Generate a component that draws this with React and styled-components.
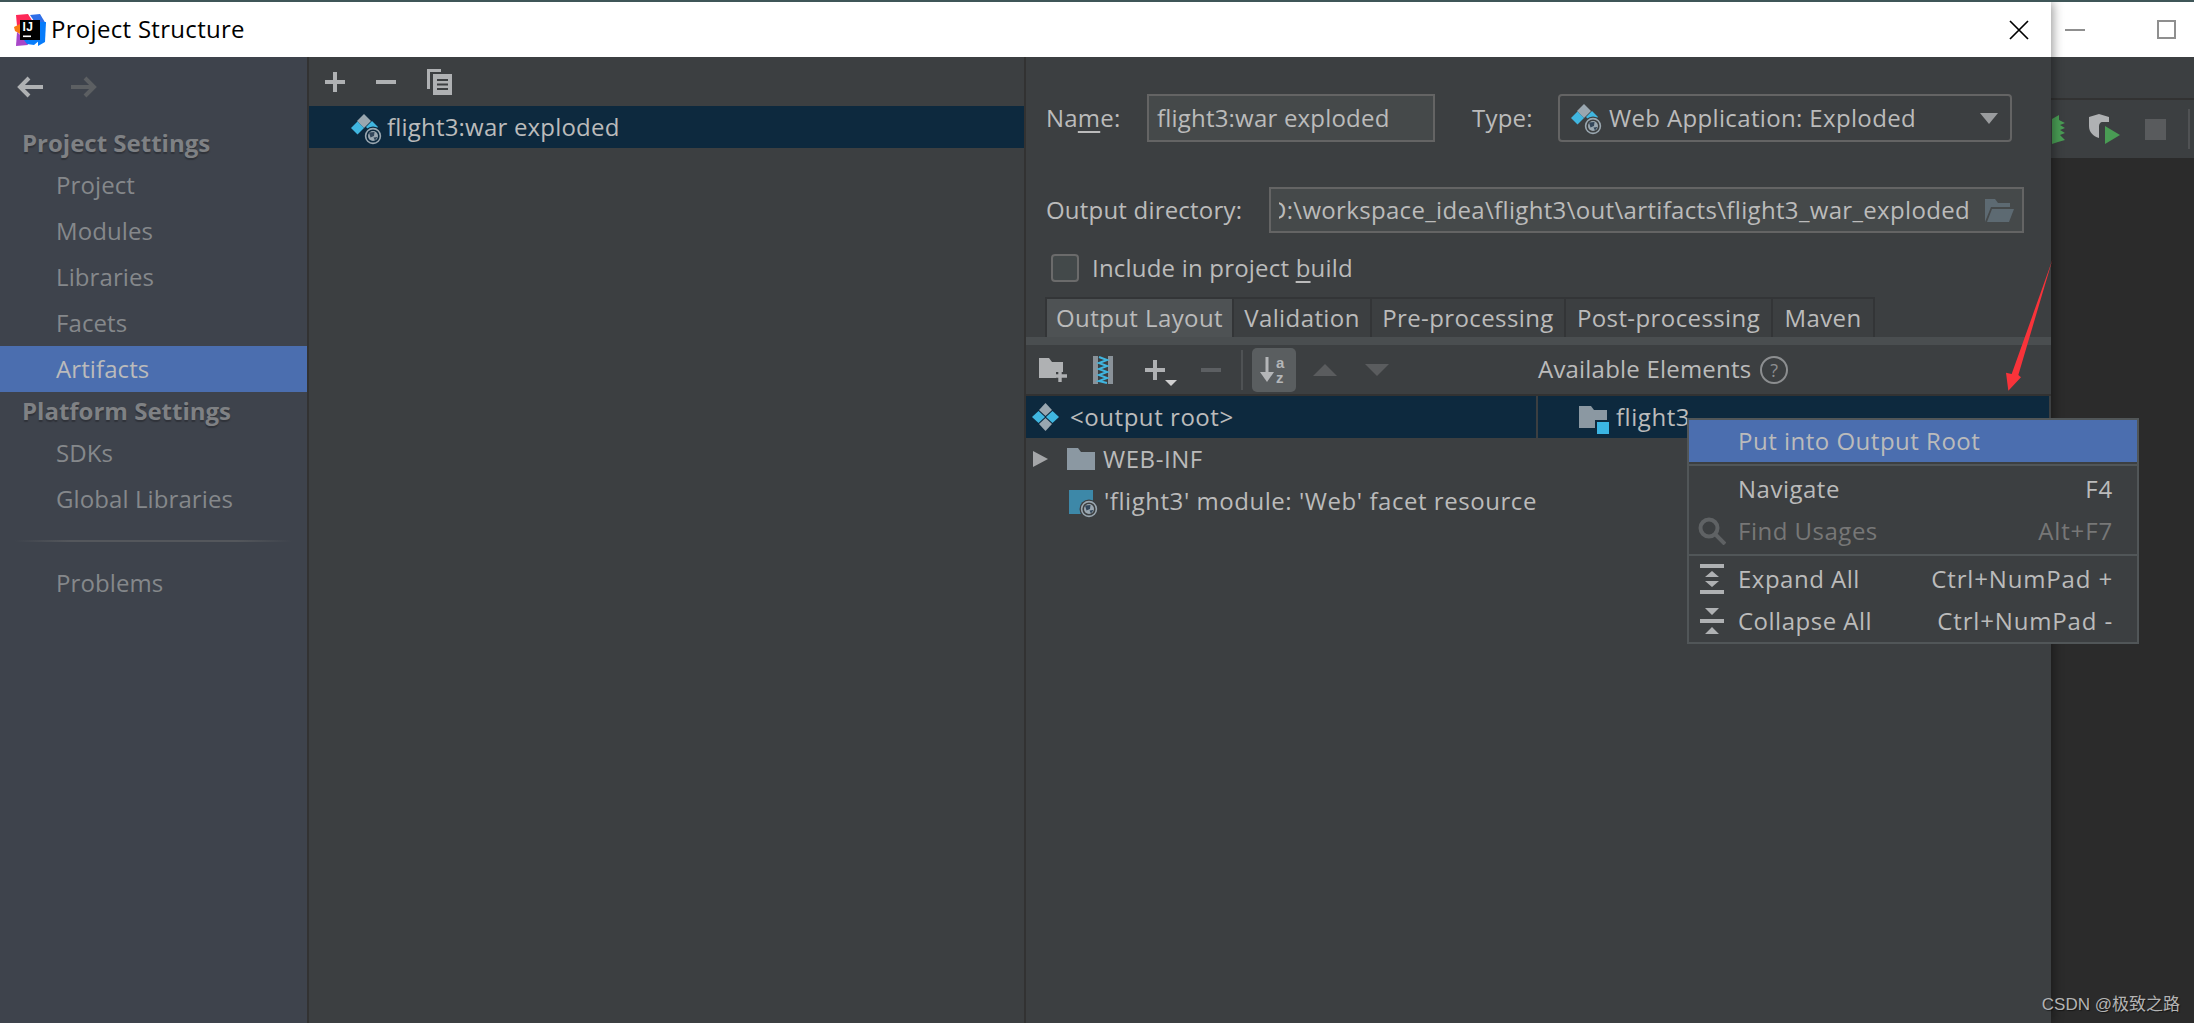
import React from 'react';
import styled, { createGlobalStyle } from 'styled-components';

const GlobalStyle = createGlobalStyle`
  html, body { margin: 0; padding: 0; background: #2b2b2b; }
  body { font-family: "Open Sans", "Noto Sans", sans-serif; overflow: hidden; }
  #root { width: 2194px; height: 1023px; }
`;

const Page = styled.div`
  position: relative;
  width: 2194px; height: 1023px;
  display: flex;
  overflow: hidden;
  border-top: 2px solid #3f5658;
  box-sizing: border-box;
  font-size: 24px;
  letter-spacing: 0.2px;
  color: #bbbbbb;
`;

// Open Sans sits a little lower in the line than the original font
const Label = styled.span`
  margin-bottom: 2px;
`;

const IconDown = styled.span`
  display: flex;
  margin-top: ${p => p.$by || 4}px;
`;

const Dialog = styled.div`
  width: 2051px;
  flex-shrink: 0;
  display: flex; flex-direction: column;
  background: #3c3f41;
  box-shadow: 2px 0 10px rgba(0,0,0,0.4);
  position: relative;
  z-index: 1;
`;

const TitleBar = styled.div`
  height: 55px;
  flex-shrink: 0;
  background: #ffffff;
  display: flex; align-items: center;
  padding: 0 22px 0 14px;
  color: #000;
  letter-spacing: 0.3px;
  gap: 5px;
`;

const TitleText = styled(Label)`
  flex: 1;
`;

const Body = styled.div`
  flex: 1;
  display: flex;
  min-height: 0;
`;

const Sidebar = styled.div`
  width: 309px;
  box-sizing: border-box;
  flex-shrink: 0;
  background: #3e434c;
  border-right: 2px solid #323232;
  display: flex; flex-direction: column;
`;

const NavRow = styled.div`
  height: 67px;
  padding: 0 0 8px 17px;
  box-sizing: border-box;
  display: flex; align-items: center; gap: 28px;
`;

const SideHeader = styled.div`
  height: 38px;
  box-sizing: border-box;
  padding: 0 0 2px 22px;
  display: flex; align-items: center;
  font-weight: 700;
  letter-spacing: 0;
  color: #7f8184;
  text-shadow: 0 2px 1px #30333a;
`;

const SideItem = styled.div`
  height: 46px;
  box-sizing: border-box;
  padding: 0 0 2px 56px;
  display: flex; align-items: center;
  letter-spacing: 0.1px;
  color: ${p => (p.$active ? '#bbbbbb' : '#85888b')};
  background: ${p => (p.$active ? '#4b6eaf' : 'transparent')};
`;

const SideSeparator = styled.div`
  height: 38px;
  display: flex; align-items: center;
  padding: 0 15px;
  &::after {
    content: '';
    flex: 1;
    height: 2px;
    background: linear-gradient(90deg, transparent, #54575c 20%, #54575c 80%, transparent);
  }
`;

const ListPanel = styled.div`
  width: 717px;
  box-sizing: border-box;
  flex-shrink: 0;
  border-right: 2px solid #323232;
  display: flex; flex-direction: column;
`;

const ListToolbar = styled.div`
  height: 49px;
  padding-left: 16px;
  display: flex; align-items: center; gap: 31px;
`;

const ListRow = styled.div`
  height: 42px;
  background: #0d293e;
  padding-left: 42px;
  display: flex; align-items: center; gap: 5px;
`;

const Detail = styled.div`
  flex: 1;
  min-width: 0;
  display: flex; flex-direction: column;
`;

const Form = styled.div`
  padding: 37px 27px 0 20px;
  display: flex; flex-direction: column;
`;

const NameRow = styled.div`
  height: 48px;
  display: flex; align-items: center;
`;

const FieldLabel = styled.label`
  width: ${p => p.$width}px;
  margin-left: ${p => p.$gap || 0}px;
  margin-bottom: 2px;
  flex-shrink: 0;
  u { text-underline-offset: 4px; }
`;

const TextBox = styled.div`
  width: ${p => p.$width}px;
  height: ${p => p.$height || 48}px;
  box-sizing: border-box;
  flex-shrink: ${p => (p.$width ? 0 : 1)};
  flex-grow: ${p => (p.$width ? 0 : 1)};
  min-width: 0;
  background: #45494a;
  border: 2px solid #646464;
  padding: 0 8px;
  display: flex; align-items: center;
`;

const TypeCombo = styled.div`
  width: 454px; height: 48px;
  box-sizing: border-box;
  border: 2px solid #646464;
  border-radius: 4px;
  padding: 0 11px;
  display: flex; align-items: center; gap: 7px;
  letter-spacing: 0.35px;
`;

const ComboText = styled(Label)`
  flex: 1;
`;

const ComboArrow = styled.span`
  width: 0; height: 0;
  margin-right: 1px;
  border-left: 9px solid transparent;
  border-right: 9px solid transparent;
  border-top: 11px solid #9a9c9e;
`;

const OutputRow = styled.div`
  margin-top: 45px;
  height: 46px;
  display: flex; align-items: center;
`;

const PathClip = styled.div`
  flex: 1;
  min-width: 0;
  margin-bottom: 2px;
  overflow: hidden;
  display: flex; justify-content: flex-end;
  white-space: nowrap;
  letter-spacing: 0.33px;
`;

const PathText = styled.span`
  flex-shrink: 0;
`;

const CheckRow = styled.div`
  margin-top: 21px;
  margin-left: 5px;
  height: 28px;
  display: flex; align-items: center; gap: 13px;
  u { text-underline-offset: 4px; }
`;

const CheckBox = styled.span`
  width: 28px; height: 28px;
  box-sizing: border-box;
  border: 2px solid #6b6b6b;
  border-radius: 4px;
  background: #43494a;
`;

const TabStrip = styled.div`
  margin-top: 15px;
  height: 40px;
  flex-shrink: 0;
  padding-left: 19px;
  display: flex;
`;

const Tab = styled.div`
  width: ${p => p.$width}px;
  box-sizing: border-box;
  padding-bottom: 2px;
  border: 2px solid #333537;
  border-bottom: none;
  border-left: ${p => (p.$active ? '2px solid #333537' : 'none')};
  background: ${p => (p.$active ? '#4e5254' : 'transparent')};
  display: flex; align-items: center; justify-content: center;
  white-space: nowrap;
  letter-spacing: 0.4px;
`;

const TabBar = styled.div`
  height: 8px;
  flex-shrink: 0;
  background: #4a4e50;
`;

const Toolbar = styled.div`
  height: 49px;
  flex-shrink: 0;
  padding-left: 13px;
  display: flex; align-items: center;
  border-bottom: 2px solid #323232;
`;

const ToolSlot = styled.span`
  margin-left: ${p => p.$gap || 0}px;
  display: flex; align-items: center;
`;

const ToolDivider = styled.span`
  width: 2px; height: 40px;
  margin-left: 20px;
  background: #4f5254;
`;

const SortButton = styled.span`
  width: 44px; height: 44px;
  margin-left: 9px;
  border-radius: 5px;
  background: #5a5e60;
  display: flex; align-items: center; justify-content: center;
`;

const AvailableLabel = styled.span`
  margin-left: 149px;
  display: flex; align-items: center; gap: 9px;
  white-space: nowrap;
`;

const HelpMark = styled.span`
  width: 28px; height: 28px;
  box-sizing: border-box;
  border: 2px solid #8c8e90;
  border-radius: 50%;
  color: #8c8e90;
  font-size: 18px;
  display: flex; align-items: center; justify-content: center;
`;

const SmallDownSlot = styled.span`
  display: flex;
  margin-top: 26px;
`;

const Trees = styled.div`
  flex: 1;
  display: flex;
  min-height: 0;
`;

const TreeColumn = styled.div`
  width: ${p => (p.$left ? '510px' : 'auto')};
  flex: ${p => (p.$left ? '0 0 auto' : '1')};
  min-width: 0;
  overflow: hidden;
  margin-left: ${p => (p.$left ? 0 : '2px')};
  margin-right: ${p => (p.$left ? 0 : '2px')};
`;

const TreeRow = styled.div`
  height: 42px;
  padding-left: ${p => p.$indent}px;
  display: flex; align-items: center; gap: ${p => p.$gap || 8}px;
  white-space: nowrap;
  letter-spacing: 0.55px;
  background: ${p => (p.$selected ? '#0d293e' : 'transparent')};
`;

const Expander = styled.span`
  width: 0; height: 0;
  border-top: 8px solid transparent;
  border-bottom: 8px solid transparent;
  border-left: 15px solid #a4a6a8;
`;

const Ide = styled.div`
  flex: 1;
  display: flex; flex-direction: column;
`;

const IdeTitle = styled.div`
  height: 55px;
  flex-shrink: 0;
  background: #ffffff;
  display: flex; align-items: center;
  padding: 0 0 0 14px;
  gap: 72px;
`;

const MinimizeGlyph = styled.span`
  width: 20px; height: 2px;
  background: #8f8f8f;
`;

const MaximizeGlyph = styled.span`
  width: 19px; height: 19px;
  box-sizing: border-box;
  border: 2px solid #8f8f8f;
`;

const IdeNavBar = styled.div`
  height: 43px;
  flex-shrink: 0;
  background: #3c3f41;
  border-bottom: 2px solid #323232;
  box-sizing: border-box;
`;

const IdeToolbar = styled.div`
  height: 58px;
  flex-shrink: 0;
  background: #3c3f41;
  display: flex; align-items: center;
  padding-left: 1px;
`;

const StopGlyph = styled.span`
  width: 21px; height: 21px;
  margin-left: 25px;
  background: #595b5d;
`;

const IdeDivider = styled.span`
  width: 2px; height: 40px;
  margin-left: 22px;
  background: #505254;
`;

const Editor = styled.div`
  flex: 1;
  background: #2b2b2b;
`;

const PopupMenu = styled.div`
  position: absolute;
  left: 1687px; top: 416px;
  width: 452px;
  box-sizing: border-box;
  background: #3c3f41;
  border: 2px solid #515658;
  z-index: 3;
  letter-spacing: 0.5px;
`;

const MenuItem = styled.div`
  height: 42px;
  display: flex; align-items: center;
  padding-right: 24px;
  background: ${p => (p.$active ? '#4b6eaf' : 'transparent')};
  color: ${p => (p.$disabled ? '#777777' : '#bbbbbb')};
`;

const MenuIcon = styled.span`
  width: 49px;
  flex-shrink: 0;
  display: flex; justify-content: center;
  padding-right: 3px;
  box-sizing: border-box;
`;

const Shortcut = styled(Label)`
  margin-left: auto;
  letter-spacing: 0.85px;
`;

const MenuSeparator = styled.div`
  height: 6px;
  display: flex; align-items: center;
  &::after {
    content: '';
    flex: 1;
    height: 2px;
    background: #515658;
  }
`;

const Arrow = styled.svg`
  position: absolute;
  left: 1980px; top: 248px;
  z-index: 2;
`;

const Watermark = styled.div`
  position: absolute;
  right: 14px; bottom: 8px;
  z-index: 4;
  font-family: "Liberation Sans", "Noto Sans CJK SC", sans-serif;
  font-size: 17px;
  letter-spacing: 0;
  color: #b4b4b4;
  text-shadow: 1px 1px 1px rgba(0,0,0,0.5);
`;

const IdeaLogo = () => (
  <svg width="32" height="32" viewBox="0 0 32 32">
    <path d="M2 1 L14 0 L19 8 L3 12 Z" fill="#fe2857" />
    <path d="M16 1 L26 0 L32 10 L22 10 Z" fill="#2f6fe8" />
    <path d="M0 13 L6 10 L6 20 L1 17 Z" fill="#f97a12" />
    <path d="M3 18 L12 26 L14 31 L2 32 Z" fill="#a846c8" />
    <path d="M24 32 L31 28 L32 8 L24 8 Z" fill="#087cfa" />
    <path d="M10 26 L26 26 L20 31 L13 30 Z" fill="#087cfa" />
    <rect x="6" y="6" width="20" height="20" fill="#000" />
    <text x="8.5" y="17" fontSize="12" fontWeight="700" fill="#fff" fontFamily="Liberation Sans">IJ</text>
    <rect x="9" y="21.5" width="8" height="1.6" fill="#fff" />
  </svg>
);

const CloseGlyph = () => (
  <svg width="20" height="20" viewBox="0 0 20 20">
    <path d="M1 1 L19 19 M19 1 L1 19" stroke="#000" strokeWidth="1.7" />
  </svg>
);

const NavArrow = ({ flip, color }) => (
  <svg width="26" height="24" viewBox="0 0 26 24">
    <g transform={flip ? 'translate(26 0) scale(-1 1)' : undefined}>
      <path d="M12 3 L3 12 L12 21 M3 12 H26" fill="none" stroke={color} strokeWidth="4" />
    </g>
  </svg>
);

const PlusIcon = ({ size = 20, color = '#afb1b3' }) => (
  <svg width={size} height={size} viewBox="0 0 20 20">
    <path d="M0 10 H20 M10 0 V20" stroke={color} strokeWidth="4" />
  </svg>
);

const MinusIcon = ({ color = '#afb1b3' }) => (
  <svg width="20" height="20" viewBox="0 0 20 20">
    <path d="M0 10 H20" stroke={color} strokeWidth="4" />
  </svg>
);

const CopyIcon = () => (
  <svg width="25" height="26" viewBox="0 0 25 26">
    <path d="M0 0 H14 V3 H3 V20 H0 Z" fill="#afb1b3" />
    <path d="M6 5 H25 V26 H6 Z" fill="#afb1b3" />
    <path d="M10 11 H21 M10 15.5 H21 M10 20 H21" stroke="#3c3f41" strokeWidth="2" />
  </svg>
);

const GlobeBadge = ({ x, y, bg }) => (
  <g transform={`translate(${x} ${y})`}>
    <circle cx="8" cy="8" r="9.5" fill={bg} />
    <circle cx="8" cy="8" r="7.4" fill="none" stroke="#9aa7b0" strokeWidth="1.6" />
    <circle cx="8" cy="8" r="5" fill="#9aa7b0" />
    <path d="M4 4.5 L9.5 4 L9 8 L5.5 9.5 Z M8.5 9.5 L12.5 9 L10 12.5 Z" fill="#33465a" />
  </g>
);

const WarIcon = ({ bg = '#0d293e' }) => (
  <svg width="31" height="31" viewBox="0 0 31 31">
    <path d="M13 0 L20 7 L13 14 L6 7 Z" fill="#9aa7b0" />
    <path d="M6.5 7.5 L13 14 L6.5 20.5 L0 14 Z" fill="#40b6e0" />
    <path d="M21 7 L27 13 L21 19 L15 13 Z" fill="#40b6e0" />
    <GlobeBadge x={14} y={14} bg={bg} />
  </svg>
);

const RootIcon = () => (
  <svg width="27" height="28" viewBox="0 0 27 28">
    <path d="M13.5 0 L20 7 L13.5 13 L7 7 Z" fill="#9aa7b0" />
    <path d="M13.5 15 L20 21 L13.5 28 L7 21 Z" fill="#9aa7b0" />
    <path d="M6.5 8 L13 14 L6.5 20 L0 14 Z" fill="#40b6e0" />
    <path d="M20.5 8 L27 14 L20.5 20 L14 14 Z" fill="#40b6e0" />
  </svg>
);

const FolderIcon = () => (
  <svg width="28" height="22" viewBox="0 0 28 22">
    <path d="M0 0 H11 L14 4 H28 V22 H0 Z" fill="#8b98a2" />
  </svg>
);

const ModuleWebIcon = () => (
  <svg width="29" height="28" viewBox="0 0 29 28">
    <path d="M0 0 H24 V24 H0 Z" fill="#3d88a8" />
    <GlobeBadge x={12} y={11} bg="#3c3f41" />
  </svg>
);

const ModuleFolderIcon = () => (
  <svg width="30" height="28" viewBox="0 0 30 28">
    <path d="M0 0 H12 L15 4 H28 V22 H0 Z" fill="#8b98a2" />
    <rect x="16" y="14" width="14" height="14" fill="#0d293e" />
    <rect x="18" y="16" width="12" height="12" fill="#3bb5e3" />
  </svg>
);

const OpenFolderIcon = () => (
  <svg width="30" height="23" viewBox="0 0 30 23">
    <path d="M1 23 V0 H11 L14 4 H26 V8 H7 Z" fill="#5d6a72" />
    <path d="M8 10 H30 L25 23 H3 Z" fill="#5d6a72" />
  </svg>
);

const NewFolderIcon = () => (
  <svg width="28" height="24" viewBox="0 0 28 24">
    <path d="M0 0 H10 L13 4 H24 V14 H17 V20 H0 Z" fill="#afb1b3" />
    <path d="M14 18 H28 M21 11 V24" stroke="#afb1b3" strokeWidth="3.4" />
  </svg>
);

const ArchiveIcon = () => (
  <svg width="20" height="28" viewBox="0 0 20 28">
    <rect x="0" y="0" width="20" height="28" fill="#8a9299" />
    <path d="M5 0 H15 V28 H5 Z" fill="#3c3f41" />
    <path d="M6 1 L14 4 L6 7 L14 10 L6 13 L14 16 L6 19 L14 22 L6 25 L14 27" fill="none" stroke="#40b6e0" strokeWidth="2" />
  </svg>
);

const SmallDown = () => (
  <svg width="12" height="6" viewBox="0 0 12 6">
    <path d="M0 0 H12 L6 6 Z" fill="#d0d0d0" />
  </svg>
);

const SortIcon = () => (
  <svg width="28" height="30" viewBox="0 0 28 30">
    <path d="M7 2 V22" stroke="#b4b6b8" strokeWidth="3" />
    <path d="M0 17 H14 L7 27 Z" fill="#b4b6b8" />
    <text x="16" y="13" fontSize="15" fontWeight="700" fill="#b4b6b8" fontFamily="Liberation Sans">a</text>
    <text x="16" y="28" fontSize="15" fontWeight="700" fill="#b4b6b8" fontFamily="Liberation Sans">z</text>
  </svg>
);

const TriangleIcon = ({ up }) => (
  <svg width="24" height="12" viewBox="0 0 24 12">
    <path d={up ? 'M0 12 H24 L12 0 Z' : 'M0 0 H24 L12 12 Z'} fill="#5a5c5e" />
  </svg>
);

const SearchIcon = () => (
  <svg width="28" height="28" viewBox="0 0 28 28">
    <circle cx="11" cy="11" r="8.5" fill="none" stroke="#5f6264" strokeWidth="4" />
    <path d="M17 17 L27 27" stroke="#5f6264" strokeWidth="4" />
  </svg>
);

const ExpandIcon = () => (
  <svg width="24" height="30" viewBox="0 0 24 30">
    <path d="M0 0 H24 V4 H0 Z M0 26 H24 V30 H0 Z" fill="#afb1b3" />
    <path d="M12 7 L19 13 H5 Z M12 23 L19 17 H5 Z" fill="#afb1b3" />
  </svg>
);

const CollapseIcon = () => (
  <svg width="24" height="26" viewBox="0 0 24 26">
    <path d="M0 11 H24 V15 H0 Z" fill="#afb1b3" />
    <path d="M5 0 H19 L12 7 Z M5 26 H19 L12 19 Z" fill="#afb1b3" />
  </svg>
);

const BugIcon = () => (
  <svg width="13" height="29" viewBox="0 0 13 29">
    <path d="M0 4 L7 0 L7 5 L13 8 L8 10 L13 13 L8 15 L13 18 L8 20 L13 25 L6 27 L0 29 Z" fill="#499c54" />
  </svg>
);

const CoverageIcon = () => (
  <svg width="31" height="30" viewBox="0 0 31 30">
    <path d="M0 3 L10 0 L20 3 V8 H14 C11 8 10 10 10 13 V24 C4 22 0 18 0 12 Z" fill="#afb1b3" />
    <path d="M16 12 L31 21 L16 30 Z" fill="#499c54" />
  </svg>
);

const menuGroups = [
  [{ label: 'Navigate', shortcut: 'F4' }, { label: 'Find Usages', shortcut: 'Alt+F7', disabled: true, icon: <SearchIcon /> }],
  [{ label: 'Expand All', shortcut: 'Ctrl+NumPad +', icon: <ExpandIcon /> }, { label: 'Collapse All', shortcut: 'Ctrl+NumPad -', icon: <CollapseIcon /> }],
];

const projectItems = ['Project', 'Modules', 'Libraries', 'Facets', 'Artifacts'];
const tabs = [
  { label: 'Output Layout', width: 189, active: true },
  { label: 'Validation', width: 138 },
  { label: 'Pre-processing', width: 194 },
  { label: 'Post-processing', width: 207 },
  { label: 'Maven', width: 102 },
];

export default function App() {
  return (
    <Page>
      <GlobalStyle />
      <Dialog>
        <TitleBar>
          <IdeaLogo />
          <TitleText>Project Structure</TitleText>
          <CloseGlyph />
        </TitleBar>
        <Body>
          <Sidebar>
            <NavRow>
              <NavArrow color="#afb1b3" />
              <NavArrow flip color="#5c5f62" />
            </NavRow>
            <SideHeader>Project Settings</SideHeader>
            {projectItems.map(item => (
              <SideItem key={item} $active={item === 'Artifacts'}>{item}</SideItem>
            ))}
            <SideHeader>Platform Settings</SideHeader>
            <SideItem>SDKs</SideItem>
            <SideItem>Global Libraries</SideItem>
            <SideSeparator />
            <SideItem>Problems</SideItem>
          </Sidebar>

          <ListPanel>
            <ListToolbar>
              <PlusIcon />
              <MinusIcon />
              <CopyIcon />
            </ListToolbar>
            <ListRow>
              <IconDown><WarIcon /></IconDown>
              <Label>flight3:war exploded</Label>
            </ListRow>
          </ListPanel>

          <Detail>
            <Form>
              <NameRow>
                <FieldLabel $width={101}>Na<u>m</u>e:</FieldLabel>
                <TextBox $width={288}><Label>flight3:war exploded</Label></TextBox>
                <FieldLabel $width={86} $gap={37}>Type:</FieldLabel>
                <TypeCombo>
                  <IconDown $by={2}><WarIcon bg="#3c3f41" /></IconDown>
                  <ComboText>Web Application: Exploded</ComboText>
                  <ComboArrow />
                </TypeCombo>
              </NameRow>
              <OutputRow>
                <FieldLabel $width={223}>Output directory:</FieldLabel>
                <TextBox $height={46}>
                  <PathClip><PathText>D:\workspace_idea\flight3\out\artifacts\flight3_war_exploded</PathText></PathClip>
                  <ToolSlot $gap={14}><OpenFolderIcon /></ToolSlot>
                </TextBox>
              </OutputRow>
              <CheckRow>
                <CheckBox />
                <Label>Include in project <u>b</u>uild</Label>
              </CheckRow>
            </Form>
            <TabStrip>
              {tabs.map(tab => (
                <Tab key={tab.label} $width={tab.width} $active={tab.active}>{tab.label}</Tab>
              ))}
            </TabStrip>
            <TabBar />
            <Toolbar>
              <NewFolderIcon />
              <ToolSlot $gap={26}><ArchiveIcon /></ToolSlot>
              <ToolSlot $gap={32}><PlusIcon /></ToolSlot>
              <SmallDownSlot><SmallDown /></SmallDownSlot>
              <ToolSlot $gap={24}><MinusIcon color="#5c5f62" /></ToolSlot>
              <ToolDivider />
              <SortButton><SortIcon /></SortButton>
              <ToolSlot $gap={17}><TriangleIcon up /></ToolSlot>
              <ToolSlot $gap={28}><TriangleIcon /></ToolSlot>
              <AvailableLabel><Label>Available Elements</Label> <HelpMark>?</HelpMark></AvailableLabel>
            </Toolbar>
            <Trees>
              <TreeColumn $left>
                <TreeRow $selected $indent={6} $gap={11}><RootIcon /><Label>&lt;output root&gt;</Label></TreeRow>
                <TreeRow $indent={7}><Expander /><ToolSlot $gap={11}><FolderIcon /></ToolSlot><Label>WEB-INF</Label></TreeRow>
                <TreeRow $indent={43} $gap={6}><IconDown $by={6}><ModuleWebIcon /></IconDown><Label>'flight3' module: 'Web' facet resources</Label></TreeRow>
              </TreeColumn>
              <TreeColumn>
                <TreeRow $selected $indent={41} $gap={7}><IconDown $by={6}><ModuleFolderIcon /></IconDown><Label>flight3</Label></TreeRow>
              </TreeColumn>
            </Trees>
          </Detail>
        </Body>
      </Dialog>

      <Ide>
        <IdeTitle>
          <MinimizeGlyph />
          <MaximizeGlyph />
        </IdeTitle>
        <IdeNavBar />
        <IdeToolbar>
          <BugIcon />
          <ToolSlot $gap={24}><CoverageIcon /></ToolSlot>
          <StopGlyph />
          <IdeDivider />
        </IdeToolbar>
        <Editor />
      </Ide>

      <Arrow width="90" height="150" viewBox="0 0 270 450">
        <path d="M85 422 L78 368 L95 372 L217 30 L115 375 L123 382 Z" fill="#f8333a" />
      </Arrow>

      <PopupMenu>
        <MenuItem $active><MenuIcon /><Label>Put into Output Root</Label></MenuItem>
        {menuGroups.map((group, i) => (
          <React.Fragment key={i}>
            <MenuSeparator />
            {group.map(item => (
              <MenuItem key={item.label} $disabled={item.disabled}>
                <MenuIcon>{item.icon}</MenuIcon>
                <Label>{item.label}</Label>
                <Shortcut>{item.shortcut}</Shortcut>
              </MenuItem>
            ))}
          </React.Fragment>
        ))}
      </PopupMenu>

      <Watermark>CSDN @极致之路</Watermark>
    </Page>
  );
}
